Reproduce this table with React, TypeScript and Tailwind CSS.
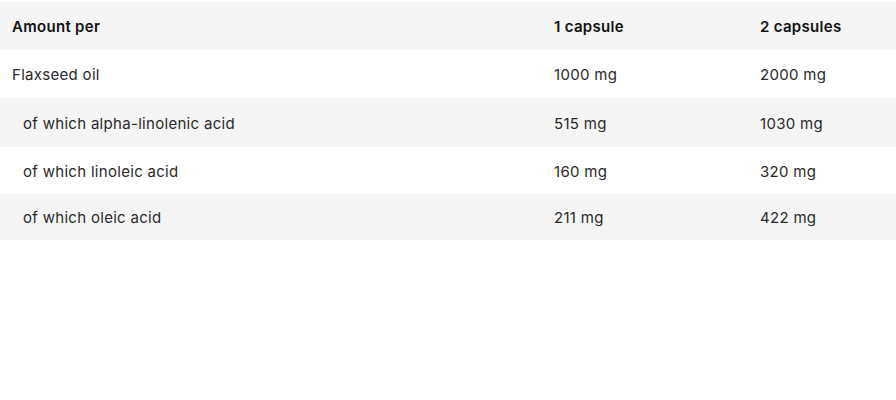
import React from 'react';

interface Row {
  name: string;
  one: string;
  two: string;
  sub?: boolean;
  height: string;
}

// Row heights follow the reference: they drift by a pixel here and there.
const rows: Row[] = [
  { name: 'Flaxseed oil', one: '1000 mg', two: '2000 mg', height: 'h-[48px]' },
  { name: 'of which alpha-linolenic acid', one: '515 mg', two: '1030 mg', sub: true, height: 'h-[49px]' },
  { name: 'of which linoleic acid', one: '160 mg', two: '320 mg', sub: true, height: 'h-[47px]' },
  { name: 'of which oleic acid', one: '211 mg', two: '422 mg', sub: true, height: 'h-[46px]' },
];

const App: React.FC = () => {
  return (
    <div className="w-[896px] h-[400px] bg-white pt-[2px] font-['Inter','Noto_Sans',sans-serif] text-[15px] tracking-[0.3px] text-[#2a2a2a]">
      <div className="grid grid-cols-[542px_206px_1fr] h-[48px] items-center bg-[#f5f5f5] pt-[3px] font-semibold text-[#111]">
        <div className="pl-3">Amount per</div>
        <div className="pl-3">1 capsule</div>
        <div className="pl-3">2 capsules</div>
      </div>
      {rows.map((row, i) => (
        <div
          key={row.name}
          className={`grid grid-cols-[542px_206px_1fr] ${row.height} items-center pt-[3px] ${i % 2 === 1 ? 'bg-[#f5f5f5]' : 'bg-white'}`}
        >
          <div className={row.sub ? 'pl-[23px]' : 'pl-3'}>{row.name}</div>
          <div className="pl-3">{row.one}</div>
          <div className="pl-3">{row.two}</div>
        </div>
      ))}
    </div>
  );
};

export default App;
